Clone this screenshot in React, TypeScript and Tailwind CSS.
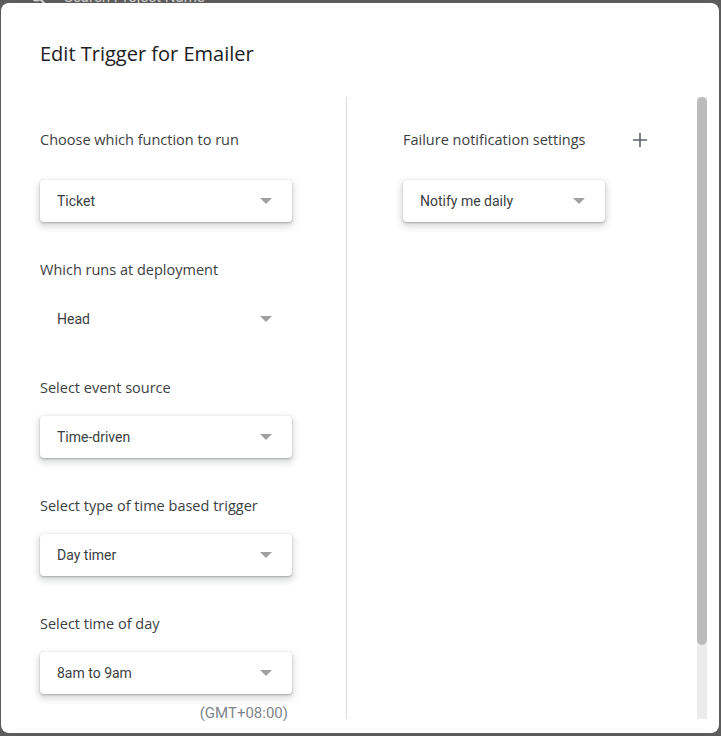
import React from "react";

const labelFont = { fontFamily: '"Open Sans", Roboto, sans-serif' };

function Arrow() {
  return (
    <svg width="12" height="6" viewBox="0 0 12 6" className="shrink-0">
      <path d="M0 0 L12 0 L6 6 Z" fill="#a0a0a0" />
    </svg>
  );
}

function Select({ value, width, flat }: { value: string; width: string; flat?: boolean }) {
  return (
    <div
      className={`flex h-[42px] ${width} items-center justify-between rounded-[4px] bg-white pl-[17px] pr-[20px] ${
        flat ? "" : "shadow-[0_1px_2px_rgba(60,64,67,0.35),0_3px_6px_2px_rgba(60,64,67,0.18)]"
      }`}
    >
      <span className="text-[14px] text-[#3c4043]" style={{ fontFamily: "Roboto, sans-serif" }}>
        {value}
      </span>
      <Arrow />
    </div>
  );
}

function Label({ children }: { children: React.ReactNode }) {
  return (
    <div className="h-[20px] text-[14.5px] leading-[20px] text-[#3c4043]" style={labelFont}>
      {children}
    </div>
  );
}

export default function App() {
  return (
    <div className="relative h-[736px] w-[721px] overflow-hidden bg-[#5c5c5c]">
      <div
        className="absolute left-[30px] top-[-14px] flex items-center gap-[18px] text-[15px] text-[#cfcfcf]"
        style={{ fontFamily: "Roboto, sans-serif" }}
      >
        <svg width="16" height="16" viewBox="0 0 16 16">
          <circle cx="6.5" cy="6.5" r="5" stroke="#cfcfcf" strokeWidth="2" fill="none" />
          <path d="M10 10 L15 15" stroke="#cfcfcf" strokeWidth="2" />
        </svg>
        <span>Search Project Name</span>
      </div>
      <div className="relative ml-[1px] mr-[2px] mt-[3px] flex h-[730px] flex-col rounded-[8px] bg-white">
        <div
          className="h-[94px] pl-[39px] pt-[38px] text-[20px] leading-[26px] text-[#202124]"
          style={labelFont}
        >
          Edit Trigger for Emailer
        </div>
        <div className="flex min-h-0 flex-1 pb-[14px] pr-[12px]">
          <div className="flex w-[346px] flex-col border-r border-[#dadce0] pl-[39px] pt-[33px]">
            <Label>Choose which function to run</Label>
            <div className="mt-[30px]">
              <Select value="Ticket" width="w-[252px]" />
            </div>
            <div className="mt-[38px]">
              <Label>Which runs at deployment</Label>
            </div>
            <div className="mt-[18px]">
              <Select value="Head" width="w-[252px]" flat />
            </div>
            <div className="mt-[38px]">
              <Label>Select event source</Label>
            </div>
            <div className="mt-[18px]">
              <Select value="Time-driven" width="w-[252px]" />
            </div>
            <div className="mt-[38px]">
              <Label>Select type of time based trigger</Label>
            </div>
            <div className="mt-[18px]">
              <Select value="Day timer" width="w-[252px]" />
            </div>
            <div className="mt-[38px]">
              <Label>Select time of day</Label>
            </div>
            <div className="mt-[18px]">
              <Select value="8am to 9am" width="w-[252px]" />
            </div>
            <div
              className="mt-[11px] w-[248px] text-right text-[15px] leading-[16px] text-[#80868b]"
              style={{ fontFamily: "Roboto, sans-serif" }}
            >
              (GMT+08:00)
            </div>
          </div>
          <div className="flex flex-1 flex-col pl-[56px] pt-[33px]">
            <div className="flex w-[244px] items-center justify-between">
              <Label>Failure notification settings</Label>
              <svg width="14" height="14" viewBox="0 0 14 14">
                <path d="M7 0 V14 M0 7 H14" stroke="#5f6368" strokeWidth="1.6" />
              </svg>
            </div>
            <div className="mt-[30px]">
              <Select value="Notify me daily" width="w-[202px]" />
            </div>
          </div>
          <div className="flex w-[10px] flex-col bg-[#ececec]">
            <div className="h-[548px] rounded-full bg-[#bcbcbc]" />
          </div>
        </div>
      </div>
    </div>
  );
}
